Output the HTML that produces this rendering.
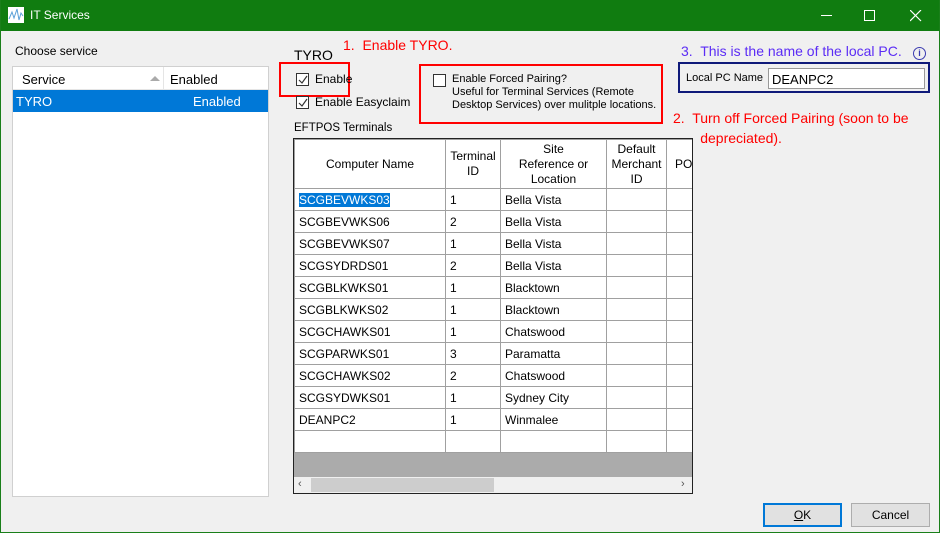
<!DOCTYPE html>
<html><head><style>
*{box-sizing:border-box;margin:0;padding:0}
body{width:940px;height:533px;background:#f0f0f0;font-family:"Liberation Sans",sans-serif;font-size:12px;color:#000;position:relative;overflow:hidden}
.a{position:absolute}
.win{left:0;top:0;width:940px;height:533px;border:1px solid #1a7f1a;border-top:none}
.title{left:0;top:0;width:940px;height:31px;background:#107c10;color:#fff}
.red{color:#f00;font-size:14px}
.box{border:2px solid #f00}
table{border-collapse:collapse}
td{border:1px solid #a0a0a0;height:22px;padding-left:4px;background:#fff;font-size:12px}
th{border:1px solid #a0a0a0;font-weight:normal;background:#fff;font-size:12px;line-height:15px}
.cb{width:13px;height:13px;border:1px solid #333;background:#fff}
</style></head><body>
<div class="a title">
 <div class="a" style="left:8px;top:7px;width:16px;height:16px;background:#fff;"><svg width="16" height="16"><path d="M1 12 L4 5 L6 11 L9 2 L11 13 L13 6 L15 9" stroke="#5aa0d8" fill="none" stroke-width="1"/></svg></div>
 <div class="a" style="left:30px;top:8px;font-size:12px">IT Services</div>
 <div class="a" style="left:821px;top:15px;width:11px;height:1px;background:#fff"></div>
 <div class="a" style="left:864px;top:10px;width:11px;height:11px;border:1px solid #fff"></div>
 <svg class="a" style="left:910px;top:10px" width="12" height="12"><path d="M0 0L11 11M11 0L0 11" stroke="#fff" stroke-width="1.2"/></svg>
</div>
<div class="a win"></div>
<div class="a" style="left:15px;top:44px">Choose service</div>
<div class="a" style="left:12px;top:66px;width:257px;height:431px;background:#fff;border:1px solid #d0d0d0">
 <div class="a" style="left:0;top:0;width:255px;height:23px;border-bottom:1px solid #e5e5e5">
  <div class="a" style="left:9px;top:5px;font-size:13px">Service</div>
  <div class="a" style="left:137px;top:9px;width:0;height:0;border-left:5px solid transparent;border-right:5px solid transparent;border-bottom:5px solid #aaa"></div>
  <div class="a" style="left:150px;top:0;width:1px;height:22px;background:#e5e5e5"></div>
  <div class="a" style="left:157px;top:5px;font-size:13px">Enabled</div>
 </div>
 <div class="a" style="left:0;top:23px;width:255px;height:22px;background:#0078d7;color:#fff;font-size:13px">
  <div class="a" style="left:3px;top:4px">TYRO</div><div class="a" style="left:180px;top:4px">Enabled</div>
 </div>
</div>
<div class="a" style="left:294px;top:47px;font-size:14px">TYRO</div>
<div class="a red" style="left:343px;top:37px">1.&nbsp; Enable TYRO.</div>
<div class="a box" style="left:279px;top:62px;width:71px;height:35px"></div>
<div class="a cb" style="left:296px;top:73px"></div><svg class="a" style="left:297px;top:74px" width="12" height="12"><path d="M2 6L5 9L10 2" stroke="#333" fill="none" stroke-width="1.2"/></svg>
<div class="a" style="left:315px;top:72px">Enable</div>
<div class="a cb" style="left:296px;top:96px"></div><svg class="a" style="left:297px;top:97px" width="12" height="12"><path d="M2 6L5 9L10 2" stroke="#333" fill="none" stroke-width="1.2"/></svg>
<div class="a" style="left:315px;top:95px">Enable Easyclaim</div>
<div class="a box" style="left:419px;top:64px;width:244px;height:60px"></div>
<div class="a cb" style="left:433px;top:74px"></div>
<div class="a" style="left:452px;top:73px;line-height:13px;font-size:11px">Enable Forced Pairing?<br>Useful for Terminal Services (Remote<br>Desktop Services) over mulitple locations.</div>
<div class="a" style="left:681px;top:43px;color:#5b2cf5;font-size:14px">3.&nbsp; This is the name of the local PC.</div>
<div class="a" style="left:913px;top:47px;width:13px;height:13px;border:1.5px solid #3b3bb0;border-radius:50%;color:#3b3bb0;font-size:9px;text-align:center;line-height:10px;font-weight:bold">i</div>
<div class="a" style="left:678px;top:62px;width:252px;height:31px;border:2px solid #0f1a7a"></div>
<div class="a" style="left:686px;top:72px;font-size:11px">Local PC Name</div>
<div class="a" style="left:768px;top:68px;width:157px;height:21px;background:#fff;border:1px solid #999;padding:3px 0 0 3px;font-size:13px">DEANPC2</div>
<div class="a red" style="left:673px;top:108px;line-height:20px">2.&nbsp; Turn off Forced Pairing (soon to be<br>&nbsp;&nbsp;&nbsp;&nbsp;&nbsp;&nbsp;&nbsp;depreciated).</div>
<div class="a" style="left:294px;top:122px;font-size:11.5px">EFTPOS Terminals</div>
<div class="a" style="left:293px;top:138px;width:400px;height:356px;border:1px solid #222;background:#ababab;overflow:hidden">
<table style="width:500px;table-layout:fixed">
<colgroup><col style="width:151px"><col style="width:55px"><col style="width:106px"><col style="width:60px"><col style="width:128px"></colgroup>
<tr style="height:49px"><th>Computer Name</th><th>Terminal<br>ID</th><th>Site<br>Reference or<br>Location</th><th>Default<br>Merchant<br>ID</th><th style="text-align:left;padding-left:8px">PO</th></tr>
<tr><td><span style="background:#0078d7;color:#fff">SCGBEVWKS03</span></td><td>1</td><td>Bella Vista</td><td></td><td></td></tr>
<tr><td>SCGBEVWKS06</td><td>2</td><td>Bella Vista</td><td></td><td></td></tr>
<tr><td>SCGBEVWKS07</td><td>1</td><td>Bella Vista</td><td></td><td></td></tr>
<tr><td>SCGSYDRDS01</td><td>2</td><td>Bella Vista</td><td></td><td></td></tr>
<tr><td>SCGBLKWKS01</td><td>1</td><td>Blacktown</td><td></td><td></td></tr>
<tr><td>SCGBLKWKS02</td><td>1</td><td>Blacktown</td><td></td><td></td></tr>
<tr><td>SCGCHAWKS01</td><td>1</td><td>Chatswood</td><td></td><td></td></tr>
<tr><td>SCGPARWKS01</td><td>3</td><td>Paramatta</td><td></td><td></td></tr>
<tr><td>SCGCHAWKS02</td><td>2</td><td>Chatswood</td><td></td><td></td></tr>
<tr><td>SCGSYDWKS01</td><td>1</td><td>Sydney City</td><td></td><td></td></tr>
<tr><td>DEANPC2</td><td>1</td><td>Winmalee</td><td></td><td></td></tr>
<tr><td></td><td></td><td></td><td></td><td></td></tr>
</table>
<div class="a" style="left:0;top:338px;width:398px;height:16px;background:#f0f0f0">
 <div class="a" style="left:4px;top:1px;color:#555;font-size:11px">‹</div>
 <div class="a" style="left:17px;top:1px;width:183px;height:14px;background:#cdcdcd"></div>
 <div class="a" style="left:387px;top:1px;color:#555;font-size:11px">›</div>
</div>
</div>
<div class="a" style="left:763px;top:503px;width:79px;height:24px;border:2px solid #0078d7;background:#e1e1e1;text-align:center;line-height:20px"><u>O</u>K</div>
<div class="a" style="left:851px;top:503px;width:79px;height:24px;border:1px solid #adadad;background:#e1e1e1;text-align:center;line-height:22px">Cancel</div>
</body></html>
